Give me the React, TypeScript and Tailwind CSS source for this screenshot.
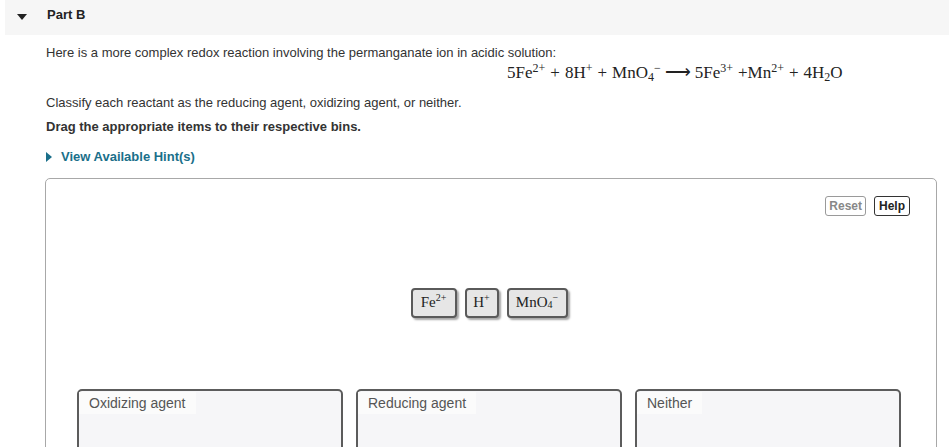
const tiles = [
  { key: "fe", base: "Fe", sup: "2+", sub: "", w: "w-[46px]" },
  { key: "h", base: "H", sup: "+", sub: "", w: "w-[34px]" },
  { key: "mno4", base: "MnO", sup: "−", sub: "4", w: "w-[61px]" },
];

const bins = ["Oxidizing agent", "Reducing agent", "Neither"];

function Tile({ base, sup, sub, w }: { base: string; sup: string; sub: string; w: string }) {
  return (
    <div
      className={`flex h-[30px] ${w} items-center justify-center rounded-[4px] border-2 border-[#5a5a5a] bg-[#e6e6e6] shadow-[2px_2px_2px_rgba(0,0,0,0.35)] font-['Liberation_Serif',serif] text-[15px] text-[#222]`}
    >
      <span>{base}</span>
      {sub ? <sub className="text-[10px]">{sub}</sub> : null}
      <sup className="text-[10px]">{sup}</sup>
    </div>
  );
}

export default function App() {
  return (
    <div className="min-h-[447px] overflow-hidden bg-white font-['Liberation_Sans',Arial,sans-serif] text-[#333]">
      <div className="ml-[5px] flex h-[35px] items-center bg-[#f6f6f6] pl-[12px]">
        <svg width="10" height="6" viewBox="0 0 10 6" className="mt-[-2px]">
          <path d="M0 0 H10 L5 6 Z" fill="#222" />
        </svg>
        <span className="ml-[20px] mt-[-5px] text-[13px] font-bold text-[#222]">Part B</span>
      </div>

      <div className="pl-[46px] pr-[12px]">
        <p className="mt-[10px] text-[13px] leading-[16px] text-[#333]">
          Here is a more complex redox reaction involving the permanganate ion in acidic solution:
        </p>
        <div className="ml-[461px] flex h-[22px] items-baseline font-['Liberation_Serif',serif] text-[17px] leading-[22px] text-[#222]">
          <span>5Fe<sup className="text-[12px]">2+</sup></span>
          <span className="mx-[5px]">+</span>
          <span>8H<sup className="text-[12px]">+</sup></span>
          <span className="mx-[5px]">+</span>
          <span>MnO<sub className="text-[12px]">4</sub><sup className="text-[12px]">−</sup></span>
          <span className="mx-[4px] text-[18px]">⟶</span>
          <span>5Fe<sup className="text-[12px]">3+</sup></span>
          <span className="ml-[5px]">+Mn<sup className="text-[12px]">2+</sup></span>
          <span className="mx-[5px]">+</span>
          <span>4H<sub className="text-[12px]">2</sub>O</span>
        </div>
        <p className="mt-[12px] text-[13px] leading-[16px] text-[#333]">
          Classify each reactant as the reducing agent, oxidizing agent, or neither.
        </p>
        <p className="mt-[8px] text-[13px] font-bold leading-[16px] text-[#333]">
          Drag the appropriate items to their respective bins.
        </p>
        <div className="mt-[12px] flex items-center">
          <svg width="6" height="10" viewBox="0 0 6 10">
            <path d="M0 0 L6 5 L0 10 Z" fill="#1a6f8a" />
          </svg>
          <span className="ml-[9px] text-[13px] font-bold text-[#1a6f8a]">View Available Hint(s)</span>
        </div>
      </div>

      <div className="ml-[45px] mt-[11px] mr-[12px] h-[300px] rounded-[5px] border border-[#a8a8a8] bg-white">
        <div className="mt-[17px] mr-[26px] flex justify-end gap-[8px]">
          <button className="rounded-[3px] border border-[#9a9a9a] px-[3px] text-[12px] font-bold leading-[18px] text-[#888]">
            Reset
          </button>
          <button className="rounded-[3px] border border-[#333] px-[4px] text-[12px] font-bold leading-[18px] text-[#222]">
            Help
          </button>
        </div>

        <div className="mt-[72px] flex justify-center gap-[8px] pr-[4px]">
          {tiles.map((t) => (
            <Tile key={t.key} base={t.base} sup={t.sup} sub={t.sub} w={t.w} />
          ))}
        </div>

        <div className="mt-[71px] flex gap-[13px] pl-[31px]">
          {bins.map((label) => (
            <div key={label} className="h-[80px] w-[266px] rounded-t-[5px] border-2 border-[#5c5c5c] bg-[#f6f6f8]">
              <span className="inline-block bg-[#fbfbfb] px-[10px] py-[3px] text-[14px] leading-[16px] text-[#555]">
                {label}
              </span>
            </div>
          ))}
        </div>
      </div>
    </div>
  );
}
